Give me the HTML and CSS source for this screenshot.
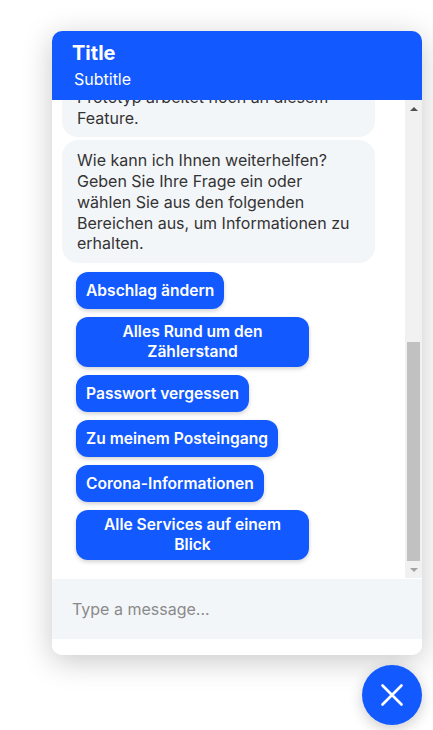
FILE: index.html
```html
<!DOCTYPE html>
<html lang="de">
<head>
<meta charset="utf-8">
<title>Chat</title>
<link rel="stylesheet" href="styles.css">
</head>
<body>
<div class="widget">
  <div class="chat">
    <div class="header">
      <div class="title">Title</div>
      <div class="subtitle">Subtitle</div>
    </div>
    <div class="body-row">
      <div class="messages">
        <div class="inner">
          <div class="bubble">Hallo! Ich bin Ihr digitaler Assistent. Wie kann ich Ihnen heute helfen?</div>
          <div class="bubble">Sie können mir Ihre Frage stellen oder eines der folgenden Themen auswählen.</div>
          <div class="user-row"><div class="user">Ich möchte meine Bankverbindung ändern.</div></div>
          <div class="bubble">Leider kann ich Ihnen bei dieser Anfrage noch nicht weiterhelfen.</div>
          <div class="user-row"><div class="user">Bankverbindung ändern</div></div>
          <div class="bubble">Das ist leider noch nicht möglich. Der<br>Prototyp arbeitet noch an diesem<br>Feature.</div>
          <div class="bubble">Wie kann ich Ihnen weiterhelfen? Geben Sie Ihre Frage ein oder wählen Sie aus den folgenden Bereichen aus, um Informationen zu erhalten.</div>
          <div class="options">
            <button class="opt">Abschlag ändern</button>
            <button class="opt">Alles Rund um den Zählerstand</button>
            <button class="opt">Passwort vergessen</button>
            <button class="opt">Zu meinem Posteingang</button>
            <button class="opt">Corona-Informationen</button>
            <button class="opt">Alle Services auf einem Blick</button>
          </div>
        </div>
      </div>
      <div class="scrollbar" aria-hidden="true">
        <div class="sb-btn"><span class="arrow-up"></span></div>
        <div class="sb-track"><div class="sb-thumb"></div></div>
        <div class="sb-btn"><span class="arrow-down"></span></div>
      </div>
    </div>
    <div class="composer">
      <input class="input" type="text" placeholder="Type a message...">
    </div>
    <div class="foot"></div>
  </div>
  <button class="close" aria-label="Schließen">
    <svg width="24" height="24" viewBox="0 0 24 24"><path d="M2.5 2.5 L21.5 21.5 M21.5 2.5 L2.5 21.5" stroke="#fff" stroke-width="2.6" stroke-linecap="round" fill="none"/></svg>
  </button>
</div>
</body>
</html>
```
FILE: styles.css
```css
* { box-sizing: border-box; }
html, body { margin: 0; padding: 0; background: #fff; }
body {
  font-family: Inter, "Noto Sans", sans-serif;
  width: 433px;
  height: 730px;
  overflow: hidden;
}
.widget {
  display: flex;
  flex-direction: column;
  align-items: flex-end;
  padding: 31px 11px 0 0;
}
.chat {
  width: 370px;
  height: 624px;
  border-radius: 10px;
  background: #fff;
  overflow: hidden;
  display: flex;
  flex-direction: column;
  box-shadow: 0 6px 30px rgba(0, 0, 0, 0.22);
}
.header {
  background: #1259ff;
  color: #fff;
  height: 69px;
  padding: 10px 20px 0 20px;
  flex: none;
}
.title {
  font-size: 20px;
  font-weight: 700;
  line-height: 24px;
}
.subtitle {
  font-size: 16px;
  line-height: 22px;
  margin-top: 3px;
  padding-left: 2px;
}
.body-row {
  height: 478px;
  flex: none;
  display: flex;
}
.messages {
  flex: 1;
  min-width: 0;
  overflow: hidden;
  display: flex;
  flex-direction: column-reverse;
}
.scrollbar {
  width: 17px;
  flex: none;
  background: #f1f1f1;
  display: flex;
  flex-direction: column;
}
.sb-btn {
  height: 17px;
  flex: none;
  display: flex;
  align-items: center;
  justify-content: center;
}
.arrow-up {
  width: 0;
  height: 0;
  border-left: 4px solid transparent;
  border-right: 4px solid transparent;
  border-bottom: 4px solid #505050;
}
.arrow-down {
  width: 0;
  height: 0;
  border-left: 4px solid transparent;
  border-right: 4px solid transparent;
  border-top: 4px solid #a3a3a3;
}
.sb-track {
  flex: 1;
  display: flex;
  flex-direction: column;
  justify-content: flex-end;
  padding: 0 2px;
}
.sb-thumb {
  height: 219px;
  background: #c1c1c1;
}
.inner {
  padding: 10px 0 18px 10px;
  display: flex;
  flex-direction: column;
  gap: 3px;
}
.bubble {
  width: 313px;
  background: #f3f6f9;
  border-radius: 16px;
  padding: 10px 20px 9px 15px;
  font-size: 16px;
  line-height: 20.7px;
  color: #333;
}
.user-row { display: flex; justify-content: flex-end; padding-right: 10px; }
.user {
  max-width: 250px;
  background: #1259ff;
  color: #fff;
  border-radius: 16px;
  padding: 10px 15px;
  font-size: 16px;
  line-height: 20.7px;
}
.options {
  display: flex;
  flex-direction: column;
  align-items: flex-start;
  gap: 8px;
  padding-left: 14px;
  margin-top: 6px;
}
.opt {
  max-width: 233px;
  min-height: 37px;
  background: #1259ff;
  color: #fff;
  border: none;
  border-radius: 12px;
  padding: 5px 10px;
  font-family: Inter, "Noto Sans", sans-serif;
  font-size: 15.6px;
  font-weight: 600;
  line-height: 20px;
  text-align: center;
  box-shadow: 0 2px 4px rgba(0, 0, 0, 0.18);
}
.composer {
  height: 60px;
  flex: none;
  background: #f3f6f9;
  margin-top: 1px;
  display: flex;
  align-items: center;
  padding: 0 20px;
}
.input {
  width: 100%;
  border: none;
  background: transparent;
  outline: none;
  font-family: Inter, "Noto Sans", sans-serif;
  font-size: 16px;
  color: #333;
  padding: 0;
}
.input::placeholder { color: #8a8a8a; }
.foot { flex: 1; background: #fff; }
.close {
  width: 60px;
  height: 60px;
  margin-top: 10px;
  border-radius: 50%;
  border: none;
  background: #1259ff;
  display: flex;
  align-items: center;
  justify-content: center;
  padding: 0;
  box-shadow: 0 4px 14px rgba(0, 0, 0, 0.2);
}
```
